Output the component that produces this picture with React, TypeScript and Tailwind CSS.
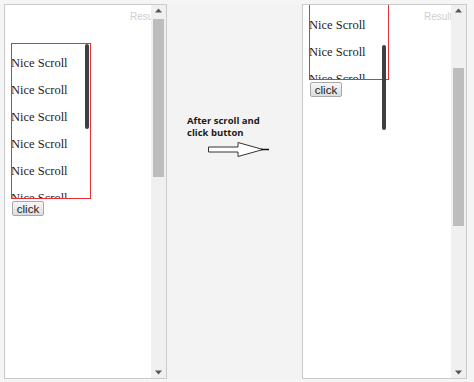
import React from 'react';

const serif = { fontFamily: '"Liberation Serif", "Times New Roman", serif' };
const sans = { fontFamily: '"Liberation Sans", Arial, sans-serif' };

function Scrollbar({ thumbTop }: { thumbTop: number }) {
  return (
    <div className="relative w-[15px] h-full bg-[#f0f0f0]">
      <svg className="absolute left-[4px] top-[3px]" width="7" height="5" viewBox="0 0 7 5">
        <path d="M0 4.5 L3.5 0.5 L7 4.5 Z" fill="#555" />
      </svg>
      <div
        className="absolute left-[2px] w-[11px] h-[158px] bg-[#bdbdbd]"
        style={{ top: thumbTop }}
      />
      <svg className="absolute left-[4px] bottom-[3px]" width="7" height="5" viewBox="0 0 7 5">
        <path d="M0 0.5 L7 0.5 L3.5 4.5 Z" fill="#555" />
      </svg>
    </div>
  );
}

interface PanelProps {
  shift: number;
  thumbTop: number;
  railLeft: number;
  railTop: number;
  labelLeft: number;
  width: number;
}

function ResultPanel({ shift, thumbTop, railLeft, railTop, labelLeft, width }: PanelProps) {
  const lines = ['Nice Scroll', 'Nice Scroll', 'Nice Scroll', 'Nice Scroll', 'Nice Scroll', 'Nice Scroll'];
  return (
    <div className="flex h-[375px] border border-[#cacaca] bg-white" style={{ width }}>
      <div className="relative flex-1 overflow-hidden">
        {/* page content, scrolled by `shift` */}
        <div className="pl-[6px] pt-[38px]" style={{ marginTop: -shift }}>
          <div className="relative w-[80px] h-[156px] border border-[#e5303a] overflow-hidden" style={serif}>
            {lines.map((t, i) => (
              <p key={i} className="my-[12px] text-[12.5px] leading-[15px] text-[#1e1e1e] whitespace-nowrap -ml-[1px]">
                {t}
              </p>
            ))}
          </div>
          <button
            className="block mt-[2px] ml-[1px] h-[15px] w-[32px] rounded-[2px] border border-[#a9a9a9] bg-gradient-to-b from-[#f6f6f6] to-[#dddddd] text-[11.5px] leading-[12px] text-[#222]"
            style={sans}
          >
            click
          </button>
        </div>

        {/* nicescroll rail */}
        <div
          className="absolute w-[4px] h-[85px] rounded-[2px] bg-[#3f3f3f]"
          style={{ left: railLeft, top: railTop }}
        />

        <span
          className="absolute top-[6px] text-[10px] leading-[12px] text-[#cfcfcf]"
          style={{ ...sans, left: labelLeft }}
        >
          Result
        </span>
      </div>
      <Scrollbar thumbTop={thumbTop} />
    </div>
  );
}

export default function App() {
  return (
    <div className="flex w-[474px] h-[382px] bg-[#f5f5f5] pl-[4px] pt-[4px]">
      <ResultPanel shift={0} thumbTop={14} railLeft={80} railTop={39} labelLeft={125} width={163} />

      <div className="w-[135px] h-[375px] bg-[#f3f3f3] pl-[20px] pt-[111px]">
        <p
          className="text-[9.5px] leading-[12px] font-bold text-[#1a1a1a]"
          style={{ fontFamily: '"Open Sans", "Liberation Sans", sans-serif' }}
        >
          After scroll and
          <br />
          click button
        </p>
        <svg className="block ml-[20px] mt-[2px]" width="64" height="17" viewBox="0 0 64 17">
          <path
            d="M1.5 6 H31 V1.5 L56 8.5 L31 15.5 V11 H1.5 Z"
            fill="#fff"
            stroke="#333"
            strokeWidth="1"
          />
          <path d="M54 8.5 H62" stroke="#111" strokeWidth="1.5" />
        </svg>
      </div>

      <ResultPanel shift={119} thumbTop={63} railLeft={79} railTop={40} labelLeft={121} width={165} />
    </div>
  );
}
